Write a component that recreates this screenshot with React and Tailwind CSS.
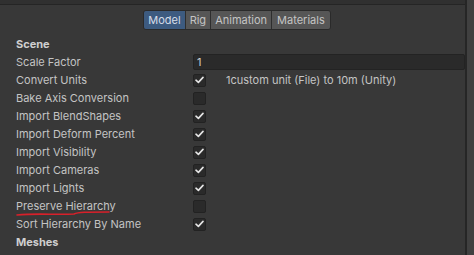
import React from 'react';

const rows = [
  { label: 'Convert Units', checked: true, note: '1custom unit (File) to 10m (Unity)' },
  { label: 'Bake Axis Conversion', checked: false },
  { label: 'Import BlendShapes', checked: true },
  { label: 'Import Deform Percent', checked: true },
  { label: 'Import Visibility', checked: true },
  { label: 'Import Cameras', checked: true },
  { label: 'Import Lights', checked: true },
  { label: 'Preserve Hierarchy', checked: false, underline: true },
  { label: 'Sort Hierarchy By Name', checked: true },
];

function Check({ checked }) {
  return (
    <div className="w-[13px] h-[13px] rounded-[2px] bg-[#2a2a2a] border border-[#222] flex items-center justify-center">
      {checked && (
        <svg width="9" height="8" viewBox="0 0 9 8">
          <path d="M1 4.2 L3.4 6.4 L8 1.4" fill="none" stroke="#e6e6e6" strokeWidth="1.6" strokeLinecap="round" strokeLinejoin="round" />
        </svg>
      )}
    </div>
  );
}

export default function App() {
  return (
    <div className="w-[474px] h-[255px] overflow-hidden bg-[#383838] flex text-[11px] text-[#c4c4c4]" style={{ fontFamily: 'Inter, "Liberation Sans", sans-serif' }}>
      <div className="flex-1 flex flex-col">
        <div className="h-[5px] bg-[#303030] border-b border-[#252525]" />
        {/* tabs */}
        <div className="flex justify-center mt-[5px] pl-[9px]">
          <div className="flex h-[20px] border border-[#2a2a2a] rounded-[3px] overflow-hidden">
            <div className="px-[4px] flex items-center bg-[#3d5b80] text-[#d6dde8]">Model</div>
            <div className="px-[4px] flex items-center bg-[#565656] border-l border-[#2e2e2e]">Rig</div>
            <div className="px-[4px] flex items-center bg-[#565656] border-l border-[#2e2e2e]">Animation</div>
            <div className="px-[5px] flex items-center bg-[#565656] border-l border-[#2e2e2e]">Materials</div>
          </div>
        </div>
        <div className="pl-[16px] mt-[5px]">
          <div className="h-[18px] flex items-center font-bold text-[#cfcfcf]">Scene</div>
          <div className="h-[18px] flex items-center">
            <div className="w-[177px]">Scale Factor</div>
            <div className="flex-1 h-[16px] bg-[#2a2a2a] border border-[#232323] rounded-[2px] flex items-center pl-[3px] text-[#d0d0d0]">1</div>
          </div>
          {rows.map((r) => (
            <div key={r.label} className="h-[18px] flex items-center">
              <div className="w-[177px] relative">
                {r.label}
                {r.underline && (
                  <svg className="absolute left-0 top-[11px]" width="100" height="8" viewBox="0 0 100 8">
                    <path d="M1 6 C 20 4, 40 6, 58 5 C 62 3, 70 3, 93 3" fill="none" stroke="#d8202a" strokeWidth="1.6" strokeLinecap="round" />
                  </svg>
                )}
              </div>
              <Check checked={r.checked} />
              {r.note && <div className="ml-[20px]">{r.note}</div>}
            </div>
          ))}
          <div className="h-[18px] flex items-center font-bold text-[#cfcfcf]">Meshes</div>
        </div>
      </div>
      <div className="w-[2px] bg-[#262626]" />
      <div className="w-[7px] bg-[#404040]" />
    </div>
  );
}
